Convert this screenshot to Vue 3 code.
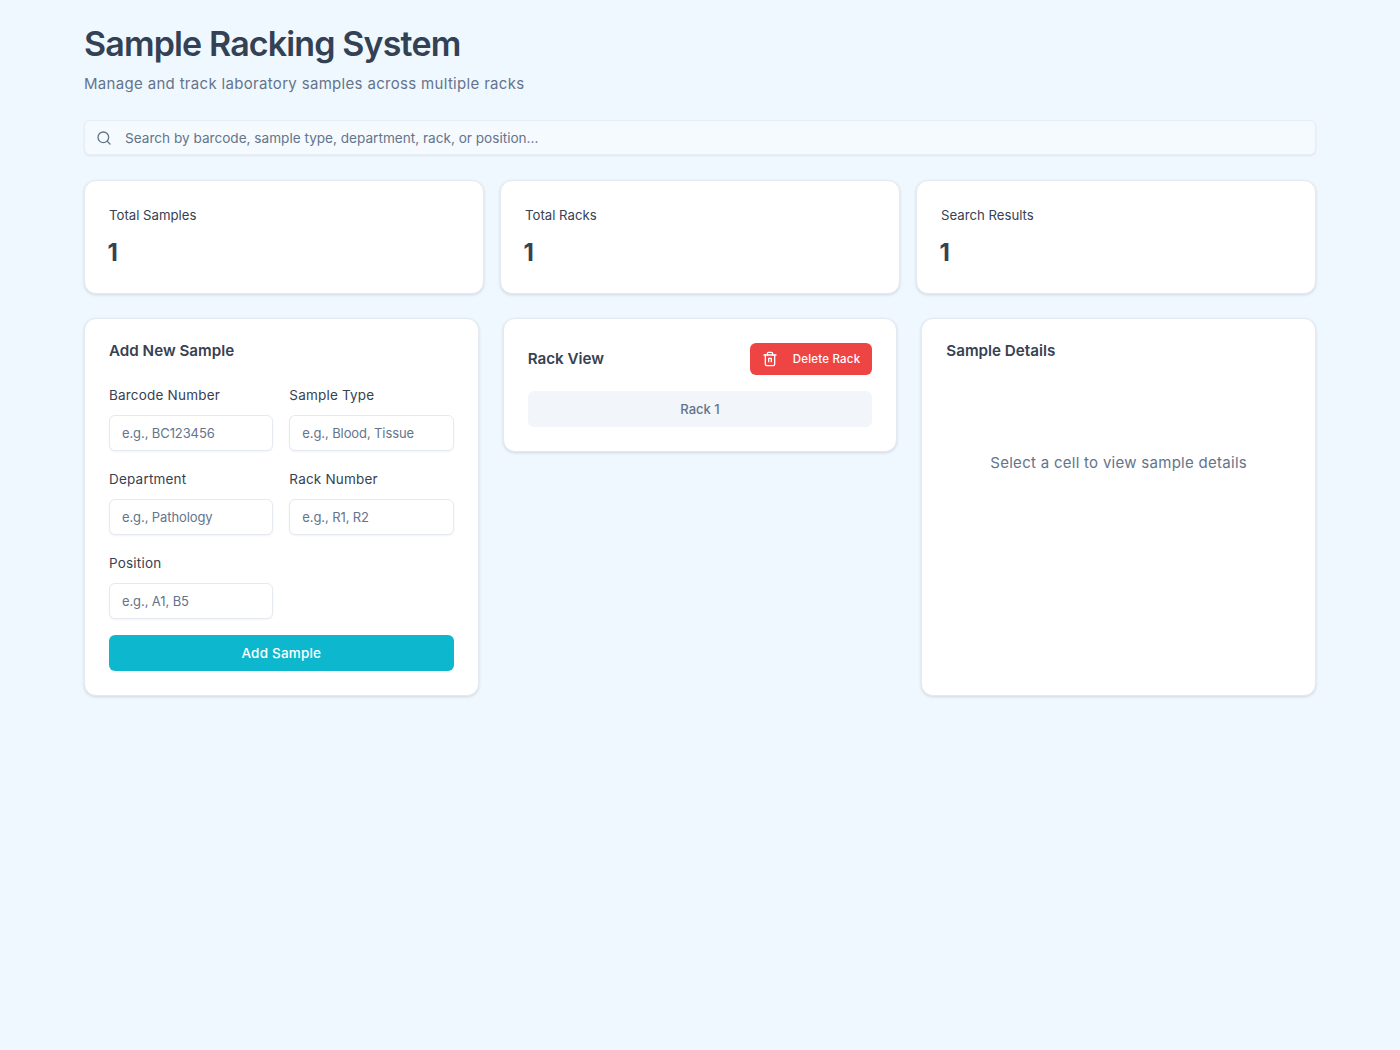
<script setup>
const stats = [
  { label: 'Total Samples', value: 1 },
  { label: 'Total Racks', value: 1 },
  { label: 'Search Results', value: 1 },
]

const fields = [
  { label: 'Barcode Number', placeholder: 'e.g., BC123456' },
  { label: 'Sample Type', placeholder: 'e.g., Blood, Tissue' },
  { label: 'Department', placeholder: 'e.g., Pathology' },
  { label: 'Rack Number', placeholder: 'e.g., R1, R2' },
  { label: 'Position', placeholder: 'e.g., A1, B5' },
]
</script>

<template>
  <div class="page">
    <header class="header">
      <h1>Sample Racking System</h1>
      <p>Manage and track laboratory samples across multiple racks</p>
    </header>

    <div class="search">
      <svg class="search-icon" width="16" height="16" viewBox="0 0 24 24" fill="none" stroke="currentColor" stroke-width="2" stroke-linecap="round" stroke-linejoin="round">
        <circle cx="11" cy="11" r="8" />
        <path d="m21 21-4.3-4.3" />
      </svg>
      <input type="text" placeholder="Search by barcode, sample type, department, rack, or position..." />
    </div>

    <section class="stats">
      <div v-for="stat in stats" :key="stat.label" class="card stat">
        <div class="stat-label">{{ stat.label }}</div>
        <div class="stat-value">{{ stat.value }}</div>
      </div>
    </section>

    <section class="columns">
      <div class="card panel">
        <h2>Add New Sample</h2>
        <form class="form" @submit.prevent>
          <div v-for="field in fields" :key="field.label" class="field">
            <label>{{ field.label }}</label>
            <input type="text" :placeholder="field.placeholder" />
          </div>
          <button class="add-btn" type="submit">Add Sample</button>
        </form>
      </div>

      <div class="card panel rack-panel">
        <div class="rack-head">
          <h2>Rack View</h2>
          <button class="delete-btn" type="button">
            <svg width="16" height="16" viewBox="0 0 24 24" fill="none" stroke="currentColor" stroke-width="2" stroke-linecap="round" stroke-linejoin="round">
              <path d="M3 6h18" />
              <path d="M19 6v14a2 2 0 0 1-2 2H7a2 2 0 0 1-2-2V6" />
              <path d="M8 6V4a2 2 0 0 1 2-2h4a2 2 0 0 1 2 2v2" />
              <path d="M10 16v-5h4v5" />
            </svg>
            <span>Delete Rack</span>
          </button>
        </div>
        <div class="rack-tab">Rack 1</div>
      </div>

      <div class="card panel">
        <h2>Sample Details</h2>
        <div class="empty">Select a cell to view sample details</div>
      </div>
    </section>
  </div>
</template>

<style>
html,
body {
  background: #f0f8ff;
}
</style>

<style scoped>
.page {
  box-sizing: border-box;
  min-height: 1050px;
  padding: 24px 84px;
  font-family: Inter, "Noto Sans", sans-serif;
  color: #374151;
  background: #f0f8ff;
}

.header h1 {
  margin: 0;
  font-size: 34px;
  line-height: 40px;
  font-weight: 600;
  letter-spacing: -0.86px;
  color: #334155;
}

.header p {
  margin: 10px 0 0;
  font-size: 15px;
  line-height: 20px;
  letter-spacing: 0.32px;
  color: #64748b;
}

.search {
  display: flex;
  align-items: center;
  gap: 13px;
  height: 35px;
  margin-top: 26px;
  padding: 0 11px;
  box-sizing: border-box;
  background: #f5faff;
  border: 1px solid #e8eef5;
  border-radius: 6px;
  box-shadow: 0 1px 2px rgba(15, 23, 42, 0.08);
}

.search-icon {
  flex: none;
  color: #64748b;
}

.search input {
  flex: 1;
  border: 0;
  outline: 0;
  padding: 0;
  background: transparent;
  font: inherit;
  font-size: 13.6px;
}

.search input::placeholder {
  color: #64748b;
  opacity: 1;
}

.card {
  box-sizing: border-box;
  background: #fff;
  border: 1px solid #e5e9f0;
  border-radius: 12px;
  box-shadow: 0 1px 3px rgba(15, 23, 42, 0.14);
}

.stats {
  display: grid;
  grid-template-columns: repeat(3, 1fr);
  gap: 16px;
  margin-top: 25px;
}

.stat {
  height: 114px;
  padding: 24px;
}

.stat-label {
  font-size: 13.2px;
  line-height: 20px;
  color: #374151;
}

.stat-value {
  margin-top: 12px;
  font-size: 24px;
  line-height: 32px;
  font-weight: 700;
  text-indent: -1.5px;
  color: #374151;
}

.columns {
  display: grid;
  grid-template-columns: repeat(3, 1fr);
  gap: 24px;
  align-items: start;
  margin-top: 24px;
}

.panel {
  padding: 24px;
  height: 378px;
}

.panel h2 {
  margin: 0;
  font-size: 15.2px;
  line-height: 16px;
  font-weight: 600;
  color: #374151;
}

.form {
  display: grid;
  grid-template-columns: 1fr 1fr;
  column-gap: 16px;
  row-gap: 16px;
  margin-top: 24px;
}

.field label {
  display: block;
  margin-bottom: 8px;
  font-size: 13.5px;
  line-height: 24px;
  letter-spacing: 0.2px;
  color: #374151;
}

.field input {
  display: block;
  box-sizing: border-box;
  width: 100%;
  height: 36px;
  padding: 0 12px;
  border: 1px solid #e5e9f0;
  border-radius: 6px;
  outline: 0;
  background: #fff;
  font: inherit;
  font-size: 13px;
  letter-spacing: -0.1px;
  box-shadow: 0 1px 2px rgba(15, 23, 42, 0.05);
}

.field input::placeholder {
  color: #64748b;
  opacity: 1;
}

.add-btn {
  grid-column: 1 / -1;
  height: 36px;
  border: 0;
  border-radius: 6px;
  background: #0db8ce;
  color: #fff;
  font: inherit;
  font-size: 13.5px;
  letter-spacing: 0.2px;
  font-weight: 500;
}

.rack-panel {
  height: 134px;
}

.rack-head {
  display: flex;
  align-items: center;
  justify-content: space-between;
}

.delete-btn {
  display: flex;
  align-items: center;
  gap: 15px;
  height: 32px;
  padding: 0 12px;
  border: 0;
  border-radius: 6px;
  background: #ef4444;
  color: #fff;
  font: inherit;
  font-size: 11.5px;
  letter-spacing: 0.2px;
  font-weight: 500;
}

.rack-tab {
  display: flex;
  align-items: center;
  justify-content: center;
  height: 36px;
  margin-top: 16px;
  border-radius: 6px;
  background: #f2f5f9;
  font-size: 13px;
  font-weight: 500;
  color: #64748b;
}

.empty {
  margin-top: 94px;
  text-align: center;
  font-size: 15px;
  line-height: 20px;
  letter-spacing: 0.28px;
  color: #64748b;
}
</style>
